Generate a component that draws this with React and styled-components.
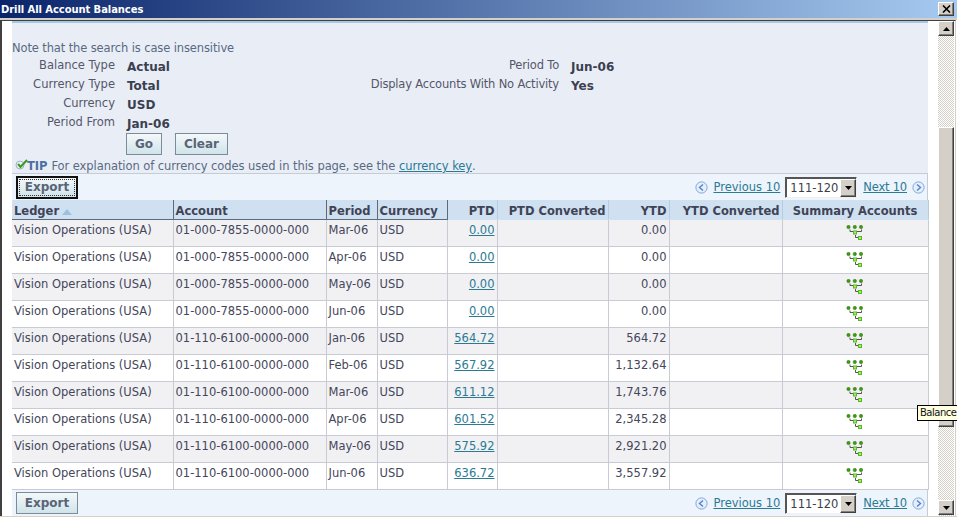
import React from 'react';
import styled, { createGlobalStyle } from 'styled-components';

const GlobalStyle = createGlobalStyle`
  html, body {
    margin: 0;
    padding: 0;
    height: 100%;
    overflow: hidden;
    background: #fff;
  }
  body {
    font-family: "DejaVu Sans", Verdana, sans-serif;
    font-size: 11.5px;
    color: #3d3d4a;
  }
`;

const Window = styled.div`
  position: relative;
  width: 957px;
  height: 517px;
  display: flex;
  flex-direction: column;
  overflow: hidden;
  box-sizing: border-box;
  border-bottom: 1px solid #d4d0c8;
`;

const TitleBar = styled.div`
  height: 18px;
  flex: none;
  display: flex;
  align-items: center;
  justify-content: space-between;
  padding: 0 1px;
  background: linear-gradient(90deg, #0a246a 0%, #a6caf0 100%);
  border-bottom: 2px solid #d4d0c8;
`;

const Title = styled.span`
  color: #fff;
  font-family: "DejaVu Sans", sans-serif;
  font-weight: bold;
  font-size: 10px;
  letter-spacing: -0.08px;
`;

const RaisedButton = styled.button`
  width: 16px;
  height: 14px;
  padding: 0;
  flex: none;
  display: flex;
  align-items: center;
  justify-content: center;
  background: #d4d0c8;
  border: 1px solid;
  border-color: #fff #404040 #404040 #fff;
  box-shadow: inset -1px -1px 0 #808080;
`;

const CloseButton = styled(RaisedButton)`
  margin: 0 2px 0 0;
`;

const Frame = styled.div`
  flex: 1;
  min-height: 0;
  display: flex;
  margin-right: 1px;
  border-top: 1px solid #404040;
  border-left: 2px solid #404040;
  border-right: 1px solid #d4d0c8;
`;

const Page = styled.div`
  flex: none;
  width: 916px;
  display: flex;
  flex-direction: column;
  margin: 0 10px;
`;

const SearchPanel = styled.div`
  height: 152px;
  flex: none;
  box-sizing: border-box;
  background: #e9eef6;
  border-top: 2px solid #a7c9e8;
  padding-top: 17px;
`;

const Note = styled.div`
  height: 17px;
  line-height: 17px;
  color: #586a82;
  letter-spacing: -0.12px;
`;

const Criteria = styled.div`
  display: grid;
  grid-template-columns: 103px 220px 200px auto;
  grid-auto-rows: 19px;
  column-gap: 12px;
  width: 700px;
  margin-top: 1px;
`;

const Label = styled.div`
  text-align: right;
  color: #55566a;
  line-height: 14px;
  white-space: nowrap;
  letter-spacing: ${(p) => (p.$tight ? -0.18 : 0)}px;
`;

const Value = styled.div`
  font-size: 12px;
  font-weight: bold;
  color: #3b3f50;
  line-height: 18px;
  white-space: nowrap;
`;

const Actions = styled.div`
  display: flex;
  gap: 13px;
  padding-left: 114px;
  margin-top: -1px;
`;

const ActionButton = styled.button`
  position: relative;
  height: ${(p) => (p.$focused ? 23 : 22)}px;
  box-sizing: border-box;
  width: ${(p) => p.$width}px;
  padding: 0;
  font: bold 12px "DejaVu Sans", sans-serif;
  color: #5a6478;
  background: linear-gradient(180deg, #f4f8fa 0%, #cfe4ea 100%);
  border: ${(p) => (p.$focused ? '2px solid #111' : '1px solid #7d8b98')};

  ${(p) =>
    p.$focused &&
    `
    &::after {
      content: '';
      position: absolute;
      inset: 1px;
      border: 1px dotted #333;
    }
  `}
`;

const Tip = styled.div`
  display: flex;
  align-items: center;
  height: 20px;
  margin-top: 1px;
  color: #586a82;
  white-space: pre;
  padding-left: 3px;
  letter-spacing: -0.06px;
`;

const TipWord = styled.span`
  font-weight: bold;
  color: #4d709e;
  margin: 0 4px 0 -1px;
`;

const DocLink = styled.a`
  color: #2a7a94;
  text-decoration: underline;
`;

const NavBar = styled.div`
  height: 27px;
  flex: none;
  box-sizing: border-box;
  display: flex;
  align-items: center;
  justify-content: space-between;
  padding: 0 2px 0 4px;
  background: #edf4fc;
  border-top: ${(p) => (p.$top ? '1px solid #c6ccd6' : 'none')};
  border-right: 1px solid #c6ccd6;
`;

const Paging = styled.div`
  display: flex;
  align-items: center;
`;

const PageLink = styled(DocLink)`
  margin: 0 5px 0 ${(p) => (p.$next ? 6 : 5)}px;
  letter-spacing: ${(p) => (p.$next ? -0.2 : 0)}px;
`;

const Select = styled.div`
  width: 72px;
  height: 21px;
  box-sizing: border-box;
  display: flex;
  align-items: center;
  justify-content: space-between;
  background: #fff;
  border: 1px solid;
  border-color: #555 #f0f0f0 #f0f0f0 #555;
  box-shadow: inset 1px 1px 0 #555;
  padding: 1px 0 0 4px;
  color: #3d3d4a;
`;

const SelectButton = styled(RaisedButton)`
  width: 16px;
  height: 18px;
`;

const Table = styled.table`
  table-layout: fixed;
  width: 916px;
  flex: none;
  border-collapse: collapse;
  border-spacing: 0;
`;

const HeadCell = styled.th`
  height: 19px;
  padding: 4px 2px 0 2px;
  box-sizing: border-box;
  background: #cfe0f0;
  font-size: 11.5px;
  font-weight: bold;
  color: #3f4356;
  text-align: ${(p) => p.$align || 'left'};
  white-space: nowrap;
  border-right: 1px solid ${(p) => (p.$sorted ? '#5b6a7c' : '#bccbdb')};
  border-bottom: 1px solid ${(p) => (p.$sorted ? '#5b6a7c' : '#cfe0f0')};
  overflow: hidden;
`;

const Row = styled.tr`
  background: ${(p) => (p.$shaded ? '#f1f1f4' : '#fff')};
`;

const Cell = styled.td`
  height: 27px;
  box-sizing: border-box;
  padding: 2px 2px 0 2px;
  vertical-align: top;
  line-height: 16px;
  text-align: ${(p) => p.$align || 'left'};
  white-space: nowrap;
  overflow: hidden;
  color: #44465a;
  border-right: 1px solid #c9cbd4;
  border-bottom: 1px solid #c9cbd4;
`;

const IconCell = styled(Cell)`
  text-align: center;
  padding: 5px 1px 0 0;
  line-height: 0;
`;

const ScrollBar = styled.div`
  width: 16px;
  flex: none;
  display: flex;
  flex-direction: column;
  margin-right: 1px;
  padding-bottom: 1px;
  background-color: #fff;
  background-image: repeating-conic-gradient(#d4d0c8 0 25%, #fff 0 50%);
  background-size: 2px 2px;
`;

const ScrollArrow = styled(RaisedButton)`
  height: 15px;
`;

const ScrollGap = styled.div`
  flex: ${(p) => p.$grow};
`;

const ScrollThumb = styled.div`
  height: 300px;
  flex: none;
  box-sizing: border-box;
  background: #d4d0c8;
  border: 1px solid;
  border-color: #fff #404040 #404040 #fff;
  box-shadow: inset -1px -1px 0 #808080;
`;

const Tooltip = styled.div`
  position: absolute;
  left: 917px;
  top: 405px;
  height: 16px;
  width: 60px;
  box-sizing: border-box;
  padding: 0 2px;
  line-height: 14px;
  font-size: 10px;
  letter-spacing: -0.5px;
  color: #111;
  background: #ffffe1;
  border: 1px solid #000;
`;

const columns = [
  { name: 'Ledger', width: 161, sorted: true },
  { name: 'Account', width: 153, sorted: true },
  { name: 'Period', width: 51, sorted: true },
  { name: 'Currency', width: 70, sorted: true },
  { name: 'PTD', width: 50, align: 'right' },
  { name: 'PTD Converted', width: 111, align: 'right' },
  { name: 'YTD', width: 61, align: 'right' },
  { name: 'YTD Converted', width: 113, align: 'right' },
  { name: 'Summary Accounts', width: 146, align: 'center' },
];

const rows = [
  ['01-000-7855-0000-000', 'Mar-06', '0.00', '0.00'],
  ['01-000-7855-0000-000', 'Apr-06', '0.00', '0.00'],
  ['01-000-7855-0000-000', 'May-06', '0.00', '0.00'],
  ['01-000-7855-0000-000', 'Jun-06', '0.00', '0.00'],
  ['01-110-6100-0000-000', 'Jan-06', '564.72', '564.72'],
  ['01-110-6100-0000-000', 'Feb-06', '567.92', '1,132.64'],
  ['01-110-6100-0000-000', 'Mar-06', '611.12', '1,743.76'],
  ['01-110-6100-0000-000', 'Apr-06', '601.52', '2,345.28'],
  ['01-110-6100-0000-000', 'May-06', '575.92', '2,921.20'],
  ['01-110-6100-0000-000', 'Jun-06', '636.72', '3,557.92'],
];

const CloseIcon = () => (
  <svg width="9" height="8" viewBox="0 0 9 8">
    <path d="M1 0.5 L8 7.5 M8 0.5 L1 7.5" stroke="#000" strokeWidth="1.6" />
  </svg>
);

const Caret = ({ up }) => (
  <svg width="7" height="4" viewBox="0 0 7 4">
    <path d={up ? 'M3.5 0 L7 4 L0 4 Z' : 'M0 0 L7 0 L3.5 4 Z'} fill="#000" />
  </svg>
);

const SortArrow = () => (
  <svg width="10" height="6" viewBox="0 0 10 6" style={{ marginLeft: 3 }}>
    <path d="M5 0 L10 6 L0 6 Z" fill="#9dbfe0" />
  </svg>
);

const CheckIcon = () => (
  <svg width="13" height="11" viewBox="0 0 13 11" style={{ marginTop: -3 }}>
    <circle cx="5" cy="6" r="4" fill="none" stroke="#9fb4c8" />
    <path d="M3 5 L5.5 8 L12 1" fill="none" stroke="#3c9a1e" strokeWidth="2" />
  </svg>
);

const PageArrow = ({ next }) => (
  <svg width="13" height="13" viewBox="0 0 13 13">
    <circle cx="6.5" cy="6.5" r="5.6" fill="#e6effa" stroke="#7fa6dc" />
    <path
      d={next ? 'M5 3.5 L8.5 6.5 L5 9.5' : 'M8 3.5 L4.5 6.5 L8 9.5'}
      fill="none"
      stroke="#4f82d0"
      strokeWidth="1.4"
    />
  </svg>
);

const HierarchyIcon = () => (
  <svg width="17" height="15" viewBox="0 0 17 15">
    <path d="M4 4.5 V6.5 H7 M15.5 4.5 V6.5 H11 M9.5 10 V12.5 H12" fill="none" stroke="#555" />
    <g fill="#3f9a10" stroke="#2f7a0c" strokeWidth="0.5">
      <circle cx="2.5" cy="2" r="1.7" />
      <circle cx="8.8" cy="2" r="1.7" />
      <circle cx="15" cy="2" r="1.7" />
    </g>
    <rect x="7.5" y="6" width="3" height="3" fill="#a4ee6a" stroke="#55b81f" />
    <rect x="12.5" y="11.5" width="3" height="3" fill="#a4ee6a" stroke="#55b81f" />
  </svg>
);

const Pager = () => (
  <Paging>
    <PageArrow />
    <PageLink href="#">Previous 10</PageLink>
    <Select>
      111-120
      <SelectButton>
        <Caret />
      </SelectButton>
    </Select>
    <PageLink href="#" $next>
      Next 10
    </PageLink>
    <PageArrow next />
  </Paging>
);

export default function App() {
  return (
    <>
      <GlobalStyle />
      <Window>
        <TitleBar>
          <Title>Drill All Account Balances</Title>
          <CloseButton>
            <CloseIcon />
          </CloseButton>
        </TitleBar>
        <Frame>
          <Page>
            <SearchPanel>
              <Note>Note that the search is case insensitive</Note>
              <Criteria>
                <Label>Balance Type</Label>
                <Value>Actual</Value>
                <Label $tight>Period To</Label>
                <Value>Jun-06</Value>
                <Label>Currency Type</Label>
                <Value>Total</Value>
                <Label $tight>Display Accounts With No Activity</Label>
                <Value>Yes</Value>
                <Label>Currency</Label>
                <Value>USD</Value>
                <span />
                <span />
                <Label>Period From</Label>
                <Value>Jan-06</Value>
              </Criteria>
              <Actions>
                <ActionButton $width={36}>Go</ActionButton>
                <ActionButton $width={53}>Clear</ActionButton>
              </Actions>
              <Tip>
                <CheckIcon />
                <TipWord>TIP</TipWord>
                For explanation of currency codes used in this page, see the{' '}
                <DocLink href="#">currency key</DocLink>.
              </Tip>
            </SearchPanel>
            <NavBar $top>
              <ActionButton $width={62} $focused>
                Export
              </ActionButton>
              <Pager />
            </NavBar>
            <Table>
              <colgroup>
                {columns.map((c) => (
                  <col key={c.name} style={{ width: c.width }} />
                ))}
              </colgroup>
              <thead>
                <tr>
                  {columns.map((c) => (
                    <HeadCell key={c.name} $align={c.align} $sorted={c.sorted}>
                      {c.name}
                      {c.name === 'Ledger' && <SortArrow />}
                    </HeadCell>
                  ))}
                </tr>
              </thead>
              <tbody>
                {rows.map((r, i) => (
                  <Row key={i} $shaded={i % 2 === 0}>
                    <Cell>Vision Operations (USA)</Cell>
                    <Cell>{r[0]}</Cell>
                    <Cell>{r[1]}</Cell>
                    <Cell>USD</Cell>
                    <Cell $align="right">
                      <DocLink href="#">{r[2]}</DocLink>
                    </Cell>
                    <Cell />
                    <Cell $align="right">{r[3]}</Cell>
                    <Cell />
                    <IconCell>
                      <HierarchyIcon />
                    </IconCell>
                  </Row>
                ))}
              </tbody>
            </Table>
            <NavBar>
              <ActionButton $width={62}>Export</ActionButton>
              <Pager />
            </NavBar>
          </Page>
          <ScrollBar>
            <ScrollArrow>
              <Caret up />
            </ScrollArrow>
            <ScrollGap $grow={90} />
            <ScrollThumb />
            <ScrollGap $grow={72} />
            <ScrollArrow>
              <Caret />
            </ScrollArrow>
          </ScrollBar>
        </Frame>
        <Tooltip>Balance</Tooltip>
      </Window>
    </>
  );
}
